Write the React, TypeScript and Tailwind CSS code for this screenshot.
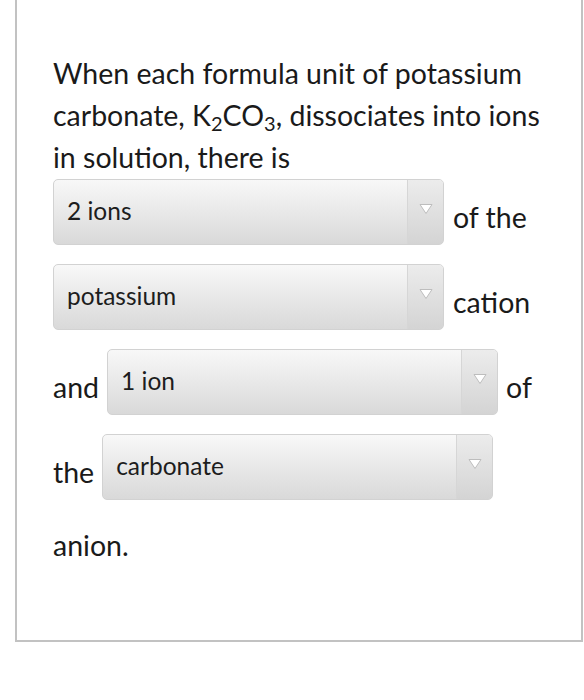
import React from "react";

const Dropdown: React.FC<{ value: string }> = ({ value }) => {
  return (
    <div className="flex h-[66px] w-[391px] shrink-0 overflow-hidden rounded-[5px] border border-[#d2d2d2] bg-gradient-to-b from-[#f8f8f8] to-[#d9d9d9]">
      <div className="flex flex-1 items-center pl-[13px] pb-[2px] text-[24.5px] text-[#1d1d1d]">
        {value}
      </div>
      <div className="flex w-[36px] items-start justify-center border-l border-[#d6d6d6] bg-gradient-to-b from-[#ececec] to-[#d4d4d4] pt-[23px]">
        <svg width="14" height="12" viewBox="0 0 14 12">
          <path d="M1 1.5 H13 L7 10.5 Z" fill="#ffffff" stroke="#bdbdbd" strokeWidth="1" strokeLinejoin="round" />
        </svg>
      </div>
    </div>
  );
};

const Word: React.FC<{ children: React.ReactNode }> = ({ children }) => (
  <span className="mt-[10px] text-[28.5px] leading-[42px] text-[#1a1a1a]">{children}</span>
);

export default function App() {
  return (
    <div
      className="h-[700px] bg-white pl-[15px]"
      style={{ fontFamily: "Lato, 'Open Sans', sans-serif" }}
    >
      <div className="h-[642px] w-[568px] border-2 border-t-0 border-[#c2c2c2] pl-[36px] pt-[52px]">
        <p className="w-[505px] text-[28.5px] leading-[42px] text-[#1a1a1a]">
          When each formula unit of potassium carbonate, K
          <sub className="relative top-[5px] align-baseline text-[20px] leading-none">2</sub>CO
          <sub className="relative top-[5px] align-baseline text-[20px] leading-none">3</sub>, dissociates into ions in
          solution, there is
        </p>

        <div className="mt-[1px] flex items-center gap-[9px]">
          <Dropdown value="2 ions" />
          <Word>of the</Word>
        </div>

        <div className="mt-[19px] flex items-center gap-[9px]">
          <Dropdown value="potassium" />
          <Word>cation</Word>
        </div>

        <div className="mt-[19px] flex items-center gap-[8px]">
          <Word>and</Word>
          <Dropdown value="1 ion" />
          <Word>of</Word>
        </div>

        <div className="mt-[19px] flex items-center gap-[8px]">
          <Word>the</Word>
          <Dropdown value="carbonate" />
        </div>

        <p className="mt-[24px] text-[28.5px] leading-[42px] text-[#1a1a1a]">anion.</p>
      </div>
    </div>
  );
}
